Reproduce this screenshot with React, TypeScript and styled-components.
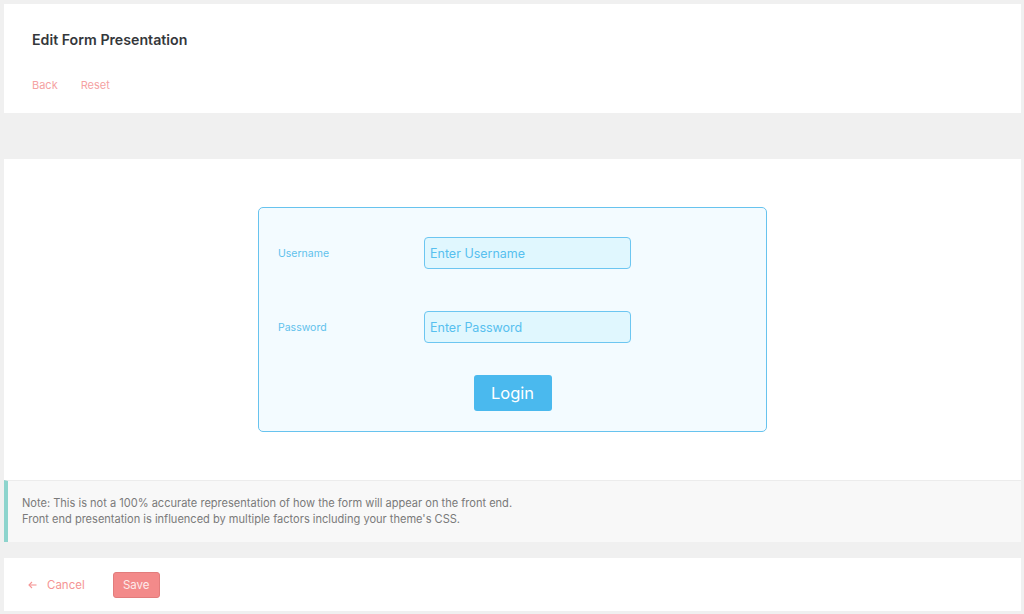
import * as React from 'react';
import styled, { createGlobalStyle } from 'styled-components';

const GlobalStyle = createGlobalStyle`
    html, body {
        margin: 0;
        padding: 0;
        background: #f0f0f0;
        font-family: Inter, "Noto Sans", "Liberation Sans", sans-serif;
    }
`;

const Page = styled.div`
    display: flex;
    flex-direction: column;
    padding: 4px 3px 3px 4px;
    width: 1024px;
    box-sizing: border-box;
`;

const Panel = styled.div`
    background: #fff;
`;

const Header = styled(Panel)`
    padding: 24px 28px 18px;
    margin-bottom: 46px;
`;

const Title = styled.h1`
    margin: 0;
    font-size: 14.2px;
    line-height: 24px;
    font-weight: 600;
    color: #34373b;
`;

const LinkRow = styled.div`
    display: flex;
    gap: 23px;
    margin-top: 23px;
`;

const TextLink = styled.a`
    font-size: 11px;
    line-height: 20px;
    color: #f5a2a2;
    cursor: pointer;
`;

const Preview = styled(Panel)`
    display: flex;
    flex-direction: column;
    margin-bottom: 16px;
`;

const Stage = styled.div`
    display: flex;
    justify-content: center;
    padding: 48px 0;
`;

const FormBox = styled.div`
    width: 509px;
    box-sizing: border-box;
    padding: 29px 19px 20px;
    background: #f3fbff;
    border: 1px solid #67c3ee;
    border-radius: 5px;
    display: flex;
    flex-direction: column;
`;

const FieldRow = styled.div`
    display: grid;
    grid-template-columns: 146px 207px;
    align-items: center;
    margin-bottom: ${(p: { gap: number }) => p.gap}px;
`;

const Label = styled.label`
    font-size: 10.5px;
    color: #5fc1ec;
`;

const Input = styled.input`
    height: 32px;
    box-sizing: border-box;
    padding: 0 5px;
    border: 1px solid #6cc6f1;
    border-radius: 4px;
    background: #e0f7fe;
    font-family: inherit;
    font-size: 12.5px;
    color: #45b3e6;
    outline: none;

    &::placeholder {
        color: #57c0ef;
    }
`;

const ButtonRow = styled.div`
    display: flex;
    justify-content: center;
`;

const LoginButton = styled.button`
    width: 78px;
    height: 36px;
    border: none;
    border-radius: 3px;
    background: #4ab9ee;
    color: #fff;
    font-family: inherit;
    font-size: 16.5px;
    cursor: pointer;
`;

const Note = styled.div`
    background: #f8f8f8;
    border-top: 1px solid #ececec;
    border-left: 4px solid #8dd4cd;
    padding: 14px 14px 15px;
    font-size: 11.05px;
    line-height: 16px;
    color: #7a7a7a;
`;

const Footer = styled(Panel)`
    display: flex;
    align-items: center;
    height: 53px;
    padding: 0 24px;
`;

const CancelLink = styled.a`
    display: flex;
    align-items: center;
    gap: 10px;
    font-size: 11.5px;
    color: #f59595;
    cursor: pointer;
`;

const SaveButton = styled.button`
    margin-left: 28px;
    width: 47px;
    height: 26px;
    border: 1px solid #e27c7c;
    border-radius: 3px;
    background: #f38a8a;
    color: #fdeaea;
    font-family: inherit;
    font-size: 11.5px;
    cursor: pointer;
`;

const ArrowIcon = () => (
    <svg width="9" height="8" viewBox="0 0 9 8" fill="none" stroke="#f59595" strokeWidth="1.1">
        <path d="M8.5 4H1" />
        <path d="M4 1L1 4l3 3" />
    </svg>
);

const App = (): JSX.Element => {
    return (
        <Page>
            <GlobalStyle />
            <Header>
                <Title>Edit Form Presentation</Title>
                <LinkRow>
                    <TextLink>Back</TextLink>
                    <TextLink>Reset</TextLink>
                </LinkRow>
            </Header>
            <Preview>
                <Stage>
                    <FormBox>
                        <FieldRow gap={42}>
                            <Label>Username</Label>
                            <Input type="text" placeholder="Enter Username" />
                        </FieldRow>
                        <FieldRow gap={32}>
                            <Label>Password</Label>
                            <Input type="password" placeholder="Enter Password" />
                        </FieldRow>
                        <ButtonRow>
                            <LoginButton>Login</LoginButton>
                        </ButtonRow>
                    </FormBox>
                </Stage>
                <Note>
                    Note: This is not a 100% accurate representation of how the form will appear on the front end.
                    <br />
                    Front end presentation is influenced by multiple factors including your theme's CSS.
                </Note>
            </Preview>
            <Footer>
                <CancelLink>
                    <ArrowIcon />
                    Cancel
                </CancelLink>
                <SaveButton>Save</SaveButton>
            </Footer>
        </Page>
    );
};

export default App;
